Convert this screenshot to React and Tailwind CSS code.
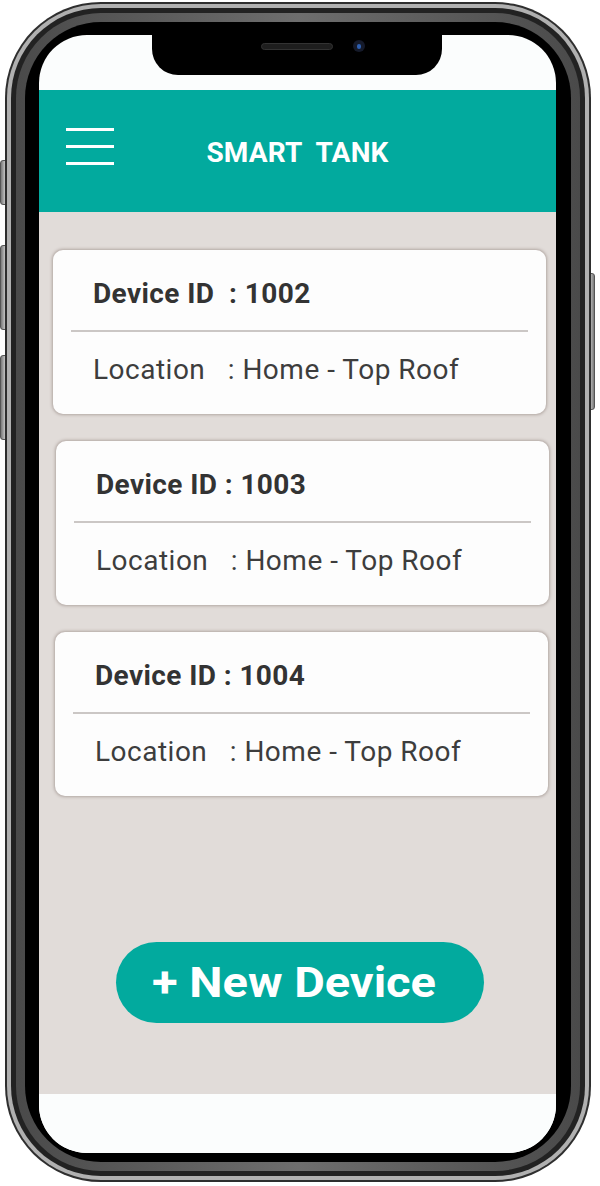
import React from "react";

const devices = [
  { id: "1002", title: "Device ID  : 1002", shift: "ml-[14px]" },
  { id: "1003", title: "Device ID : 1003", shift: "ml-[17px]" },
  { id: "1004", title: "Device ID : 1004", shift: "ml-[16px]" },
];

function DeviceCard({ title, shift }) {
  return (
    <div
      className={`${shift} w-[493px] h-[164px] bg-[#fdfdfd] rounded-[10px] shadow-[0_0_3px_1px_rgba(90,70,60,0.35)] flex flex-col`}
    >
      <div className="h-[80px] pl-[40px] pt-[26px] text-[28px] font-bold text-[#333] leading-[36px] tracking-[0.4px]">
        <span className="whitespace-pre">{title}</span>
      </div>
      <div className="mx-[18px] h-[2px] bg-[#cbc7c5]" />
      <div className="pl-[40px] pt-[20px] text-[28px] text-[#3d3d3d] leading-[36px] tracking-[0.5px] whitespace-pre">
        Location   : Home - Top Roof
      </div>
    </div>
  );
}

export default function App() {
  return (
    <div className="relative w-[600px] h-[1186px] bg-white font-['Roboto',sans-serif]">
      {/* side buttons */}
      <div className="absolute left-0 top-[160px] w-[6px] h-[45px] rounded-l-[3px] bg-gradient-to-r from-[#7a7a7a] to-[#c4c4c4] border border-[#555]" />
      <div className="absolute left-0 top-[245px] w-[6px] h-[85px] rounded-l-[3px] bg-gradient-to-r from-[#7a7a7a] to-[#c4c4c4] border border-[#555]" />
      <div className="absolute left-0 top-[355px] w-[6px] h-[85px] rounded-l-[3px] bg-gradient-to-r from-[#7a7a7a] to-[#c4c4c4] border border-[#555]" />
      <div className="absolute left-[589px] top-[273px] w-[6px] h-[137px] rounded-r-[3px] bg-gradient-to-l from-[#7a7a7a] to-[#c4c4c4] border border-[#555]" />

      {/* phone body */}
      <div className="absolute left-[5px] top-[2px] w-[586px] h-[1180px] rounded-[96px] bg-[#2e2e2e] p-[2px]">
        <div className="w-full h-full rounded-[94px] bg-[#b0b0b0] p-[4px]">
          <div className="w-full h-full rounded-[90px] bg-[#222] p-[5px]">
            <div className="w-full h-full rounded-[85px] bg-gradient-to-r from-[#4a4a4a] via-[#6e6e6e] to-[#4a4a4a] p-[9px]">
              <div className="w-full h-full rounded-[76px] bg-black pt-[13px] pl-[14px] pr-[15px] pb-[9px]">
                {/* screen */}
                <div className="relative w-full h-full rounded-[48px] overflow-hidden flex flex-col bg-[#fbfdfd]">
                  {/* notch */}
                  <div className="absolute left-[113px] top-0 w-[290px] h-[40px] bg-black rounded-b-[26px]">
                    <div className="absolute left-[109px] top-[8px] w-[72px] h-[7px] rounded-full bg-[#1e1e1e] border border-[#333]" />
                    <div className="absolute left-[201px] top-[5px] w-[12px] h-[12px] rounded-full bg-[#151a2a] flex items-center justify-center">
                      <div className="w-[4px] h-[5px] rounded-full bg-[#2e5fb0]" />
                    </div>
                  </div>

                  <div className="h-[55px] shrink-0" />

                  {/* header */}
                  <div className="h-[122px] shrink-0 bg-[#02aa9e] relative flex items-center justify-center pt-[4px]">
                    <div className="absolute left-[27px] top-[38px] w-[48px] flex flex-col gap-[14px]">
                      <div className="h-[3px] bg-white" />
                      <div className="h-[3px] bg-white" />
                      <div className="h-[3px] bg-white" />
                    </div>
                    <span className="text-white text-[28px] font-bold tracking-[0.2px] whitespace-pre">
                      SMART  TANK
                    </span>
                  </div>

                  {/* body */}
                  <div className="flex-1 bg-[#e1dcd9] flex flex-col pt-[38px]">
                    <div className="flex flex-col gap-[27px]">
                      {devices.map((d) => (
                        <DeviceCard key={d.id} title={d.title} shift={d.shift} />
                      ))}
                    </div>
                    <div className="mt-[146px] ml-[77px] w-[368px] h-[81px] rounded-full bg-[#02aa9e] flex items-center pl-[36px] text-white text-[42px] font-bold">
                      <span className="inline-block origin-left scale-x-[1.12] whitespace-pre">+ New Device</span>
                    </div>
                  </div>

                  <div className="h-[59px] shrink-0 bg-[#fbfdfd]" />
                </div>
              </div>
            </div>
          </div>
        </div>
      </div>
    </div>
  );
}
